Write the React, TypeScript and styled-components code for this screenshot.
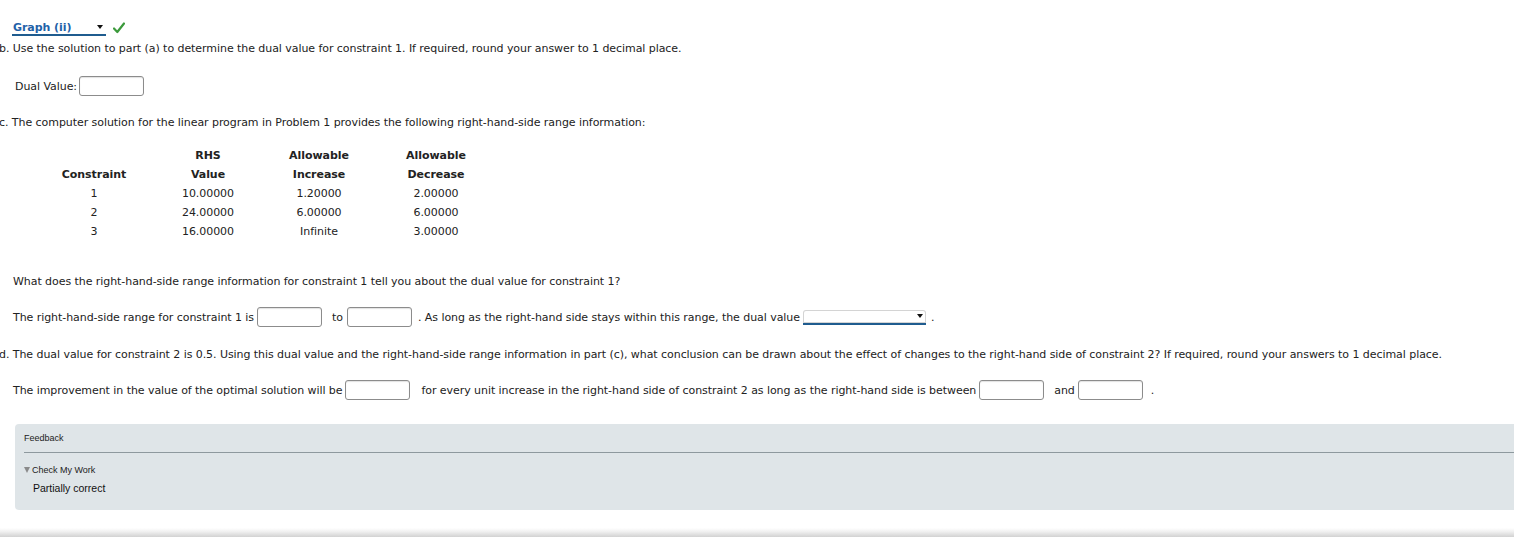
import React from "react";
import styled, { createGlobalStyle } from "styled-components";

const Global = createGlobalStyle`
  html, body { margin: 0; padding: 0; background: #fff; overflow: hidden; }
  body { font-family: "DejaVu Sans", Verdana, sans-serif; font-size: 11px; color: #222; letter-spacing: -0.06px; }
`;

const Page = styled.div`
  width: 1514px;
  height: 541px;
  position: relative;
  overflow: hidden;
  display: flex;
  flex-direction: column;
`;

const GraphRow = styled.div`
  display: flex;
  align-items: center;
  height: 16px;
  margin: 20px 0 0 12px;
  gap: 7px;
`;

const DropSelect = styled.div<{ $w: number; $bold?: boolean }>`
  width: ${(p) => p.$w}px;
  height: 15px;
  box-sizing: border-box;
  display: flex;
  align-items: center;
  justify-content: space-between;
  padding: 0 3px 0 1px;
  border-bottom: 2px solid #1f5c8f;
  border-radius: 3px 3px 0 0;
  box-shadow: ${(p) => (p.$bold ? "none" : "inset 0 0 0 1px #d4d4d4")};
  color: #1f62a8;
  font-weight: bold;
  font-size: 11px;
`;

const Arrow = styled.span`
  width: 0;
  height: 0;
  border-left: 3px solid transparent;
  border-right: 3px solid transparent;
  border-top: 4px solid #111;
`;

const Line = styled.div<{ $mt: number; $ml?: number }>`
  margin-top: ${(p) => p.$mt}px;
  margin-left: ${(p) => p.$ml ?? 0}px;
  line-height: 14px;
  height: 14px;
  white-space: nowrap;
`;

const FieldRow = styled.div<{ $mt: number; $ml: number }>`
  display: flex;
  align-items: center;
  height: 20px;
  margin-top: ${(p) => p.$mt}px;
  margin-left: ${(p) => p.$ml}px;
  white-space: nowrap;
`;

const Field = styled.div<{ $ml?: number; $mr?: number }>`
  width: 65px;
  height: 20px;
  box-sizing: border-box;
  border: 1px solid #8c8c8c;
  border-radius: 3px;
  box-shadow: inset 0 1px 1px rgba(0, 0, 0, 0.12);
  background: #fff;
  margin-left: ${(p) => p.$ml ?? 0}px;
  margin-right: ${(p) => p.$mr ?? 0}px;
`;

const Table = styled.div`
  display: grid;
  grid-template-columns: 88px 140px 82px 152px;
  grid-auto-rows: 19px;
  margin: 16px 0 0 50px;
  width: max-content;
`;

const Cell = styled.div<{ $head?: boolean }>`
  text-align: center;
  line-height: 19px;
  font-weight: ${(p) => (p.$head ? "bold" : "normal")};
  white-space: nowrap;
`;

const Feedback = styled.div`
  margin: 24px 0 0 15px;
  height: 86px;
  background: #dfe5e8;
  border-radius: 4px 0 0 4px;
  padding: 8px 0 0 9px;
  box-sizing: border-box;
  font-family: "Liberation Sans", Arial, sans-serif;
  letter-spacing: 0;
  color: #222;
`;

const FbTitle = styled.div`
  font-size: 9px;
  line-height: 12px;
  height: 12px;
`;

const Divider = styled.div`
  height: 1px;
  background: #8e999e;
  margin-top: 8px;
`;

const CheckHead = styled.div`
  display: flex;
  align-items: center;
  gap: 2px;
  font-size: 9px;
  line-height: 12px;
  margin-top: 11px;
`;

const Tri = styled.span`
  width: 0;
  height: 0;
  border-left: 3px solid transparent;
  border-right: 3px solid transparent;
  border-top: 6px solid #8a8a8a;
`;

const Result = styled.div`
  font-size: 10.5px;
  line-height: 14px;
  margin: 5px 0 0 9px;
  color: #111;
`;

const BottomBar = styled.div`
  margin-top: 18px;
  height: 9px;
  background: linear-gradient(to bottom, #ffffff 0%, #f0f0f0 40%, #d2d2d2 100%);
`;

const rows = [
  ["1", "10.00000", "1.20000", "2.00000"],
  ["2", "24.00000", "6.00000", "6.00000"],
  ["3", "16.00000", "Infinite", "3.00000"],
];

export default function App() {
  return (
    <Page>
      <Global />
      <GraphRow>
        <DropSelect $w={94} $bold>
          <span>Graph (ii)</span>
          <Arrow />
        </DropSelect>
        <svg width="12" height="12" viewBox="0 0 12 12">
          <path d="M1 6.5 L4.3 10 L11 1.5" fill="none" stroke="#3c9a3c" strokeWidth="2.2" strokeLinecap="round" strokeLinejoin="round" />
        </svg>
      </GraphRow>
      <Line $mt={6} $ml={-1}>
        b. Use the solution to part (a) to determine the dual value for constraint 1. If required, round your answer to 1 decimal place.
      </Line>
      <FieldRow $mt={20} $ml={15}>
        Dual Value:<Field $ml={2} />
      </FieldRow>
      <Line $mt={20} $ml={-1}>
        c. The computer solution for the linear program in Problem 1 provides the following right-hand-side range information:
      </Line>
      <Table>
        <Cell $head />
        <Cell $head>RHS</Cell>
        <Cell $head>Allowable</Cell>
        <Cell $head>Allowable</Cell>
        <Cell $head>Constraint</Cell>
        <Cell $head>Value</Cell>
        <Cell $head>Increase</Cell>
        <Cell $head>Decrease</Cell>
        {rows.map((r) => r.map((c, i) => <Cell key={r[0] + i}>{c}</Cell>))}
      </Table>
      <Line $mt={34} $ml={13}>
        What does the right-hand-side range information for constraint 1 tell you about the dual value for constraint 1?
      </Line>
      <FieldRow $mt={18} $ml={13}>
        The right-hand-side range for constraint 1 is
        <Field $ml={3} $mr={10} />
        to
        <Field $ml={4} $mr={6} />
        . As long as the right-hand side stays within this range, the dual value
        <DropSelect $w={123} style={{ marginLeft: 3, marginRight: 5 }}>
          <span />
          <Arrow />
        </DropSelect>
        .
      </FieldRow>
      <Line $mt={21} $ml={-1}>
        d. The dual value for constraint 2 is 0.5. Using this dual value and the right-hand-side range information in part (c), what conclusion can be drawn about the effect of changes to the right-hand side of constraint 2? If required, round your answers to 1 decimal place.
      </Line>
      <FieldRow $mt={18} $ml={13}>
        The improvement in the value of the optimal solution will be
        <Field $ml={3} $mr={11} />
        for every unit increase in the right-hand side of constraint 2 as long as the right-hand side is between
        <Field $ml={3} $mr={10} />
        and
        <Field $ml={3} $mr={8} />
        .
      </FieldRow>
      <Feedback>
        <FbTitle>Feedback</FbTitle>
        <Divider />
        <CheckHead>
          <Tri />
          Check My Work
        </CheckHead>
        <Result>Partially correct</Result>
      </Feedback>
      <BottomBar />
    </Page>
  );
}
